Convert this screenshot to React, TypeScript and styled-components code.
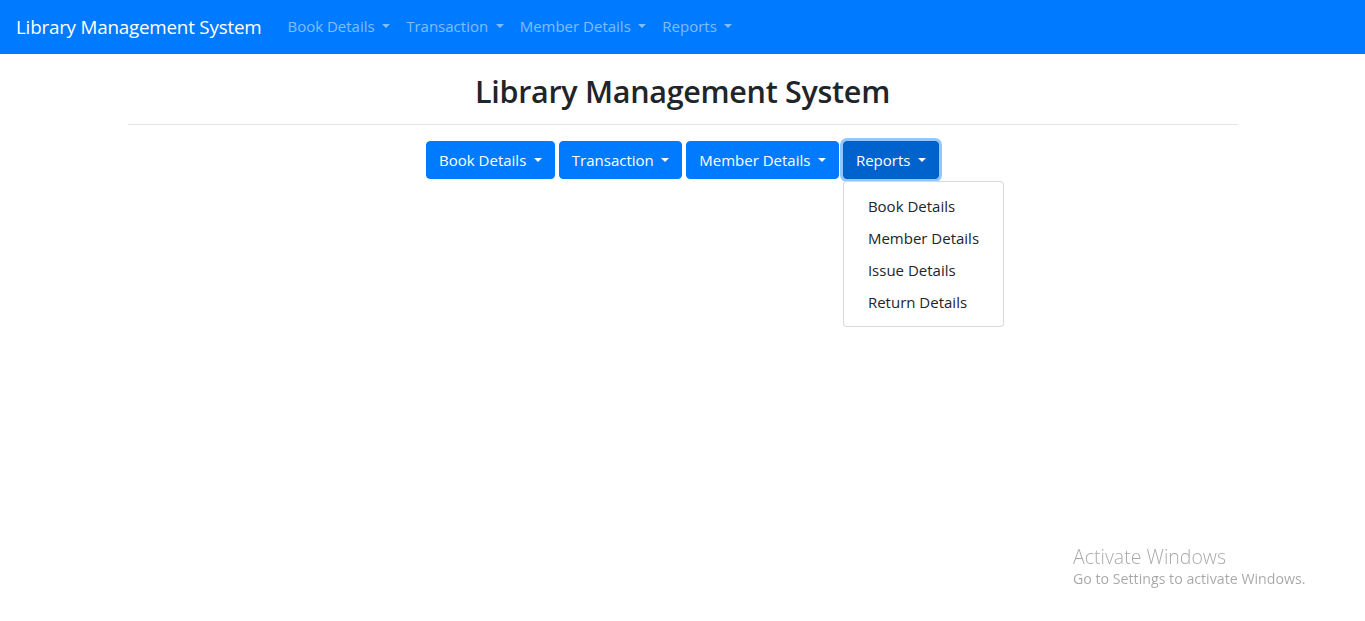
import React from "react";
import styled, { createGlobalStyle, css } from "styled-components";

const GlobalStyle = createGlobalStyle`
  *, *::before, *::after {
    box-sizing: border-box;
  }

  html, body {
    margin: 0;
    min-height: 100%;
  }

  body {
    font-family: "Open Sans", "Noto Sans", "Liberation Sans", sans-serif;
    font-size: 16px;
    line-height: 1.5;
    color: #212529;
    background: #fff;
  }
`;

const caret = css`
  &::after {
    content: "";
    display: inline-block;
    margin-left: 0.5em;
    vertical-align: 0.255em;
    border-top: 0.3em solid;
    border-right: 0.3em solid transparent;
    border-left: 0.3em solid transparent;
    border-bottom: 0;
  }
`;

const Page = styled.div`
  position: relative;
  min-height: 100vh;
`;

const Navbar = styled.nav`
  display: flex;
  align-items: center;
  height: 54px;
  padding: 0 16px;
  background: #007bff;
`;

const Brand = styled.a`
  margin-right: 18px;
  color: #fff;
  font-size: 18.8px;
  line-height: 30px;
  text-decoration: none;
  letter-spacing: -0.2px;
`;

const NavList = styled.ul`
  display: flex;
  list-style: none;
  margin: -2px 0 0;
  padding: 0;
`;

const NavLink = styled.a`
  display: block;
  padding: 8px;
  color: rgba(255, 255, 255, 0.5);
  font-size: 15px;
  text-decoration: none;
  ${caret}
`;

const Container = styled.main`
  max-width: 1140px;
  margin: 0 auto;
  padding: 0 15px;
`;

const Title = styled.h2`
  margin: 18px 0 0;
  font-size: 30.5px;
  font-weight: 600;
  line-height: 38px;
  text-align: center;
  letter-spacing: -0.3px;
`;

const Rule = styled.hr`
  margin: 14px 0 16px;
  border: 0;
  border-top: 1px solid rgba(0, 0, 0, 0.1);
`;

const ButtonRow = styled.div`
  display: flex;
  justify-content: center;
  gap: 4px;
`;

const Dropdown = styled.div`
  position: relative;
`;

const Toggle = styled.button<{ $active?: boolean }>`
  display: block;
  height: 38px;
  padding: 0 12px;
  font-family: inherit;
  font-size: 15px;
  color: #fff;
  background: ${(p) => (p.$active ? "#0062cc" : "#007bff")};
  border: 1px solid ${(p) => (p.$active ? "#005cbf" : "#007bff")};
  border-radius: 4px;
  box-shadow: ${(p) => (p.$active ? "0 0 0 3px rgba(38, 143, 255, 0.5)" : "none")};
  cursor: pointer;
  ${caret}
`;

const Menu = styled.div`
  position: absolute;
  top: 40px;
  left: 0;
  z-index: 10;
  min-width: 160px;
  padding: 8px 0;
  background: #fff;
  border: 1px solid rgba(0, 0, 0, 0.15);
  border-radius: 4px;
`;

const MenuItem = styled.div`
  padding: 4px 24px;
  color: #212529;
  font-size: 15px;
  line-height: 24px;
  white-space: nowrap;
`;

const Watermark = styled.div`
  position: fixed;
  left: 1073px;
  top: 544px;
  color: rgba(0, 0, 0, 0.35);
  pointer-events: none;
`;

const WatermarkTitle = styled.div`
  font-size: 19.5px;
  font-weight: 300;
  line-height: 26px;
`;

const WatermarkText = styled.div`
  font-size: 14.2px;
  line-height: 18px;
`;

const menus = ["Book Details", "Transaction", "Member Details", "Reports"];
const reportItems = ["Book Details", "Member Details", "Issue Details", "Return Details"];

export default function App() {
  const openMenu = "Reports";

  return (
    <Page>
      <GlobalStyle />
      <Navbar>
        <Brand href="#">Library Management System</Brand>
        <NavList>
          {menus.map((m) => (
            <li key={m}>
              <NavLink href="#">{m}</NavLink>
            </li>
          ))}
        </NavList>
      </Navbar>

      <Container>
        <Title>Library Management System</Title>
        <Rule />
        <ButtonRow>
          {menus.map((m) => (
            <Dropdown key={m}>
              <Toggle type="button" $active={m === openMenu}>
                {m}
              </Toggle>
              {m === openMenu ? (
                <Menu>
                  {reportItems.map((item) => (
                    <MenuItem key={item}>{item}</MenuItem>
                  ))}
                </Menu>
              ) : null}
            </Dropdown>
          ))}
        </ButtonRow>
      </Container>

      <Watermark>
        <WatermarkTitle>Activate Windows</WatermarkTitle>
        <WatermarkText>Go to Settings to activate Windows.</WatermarkText>
      </Watermark>
    </Page>
  );
}
